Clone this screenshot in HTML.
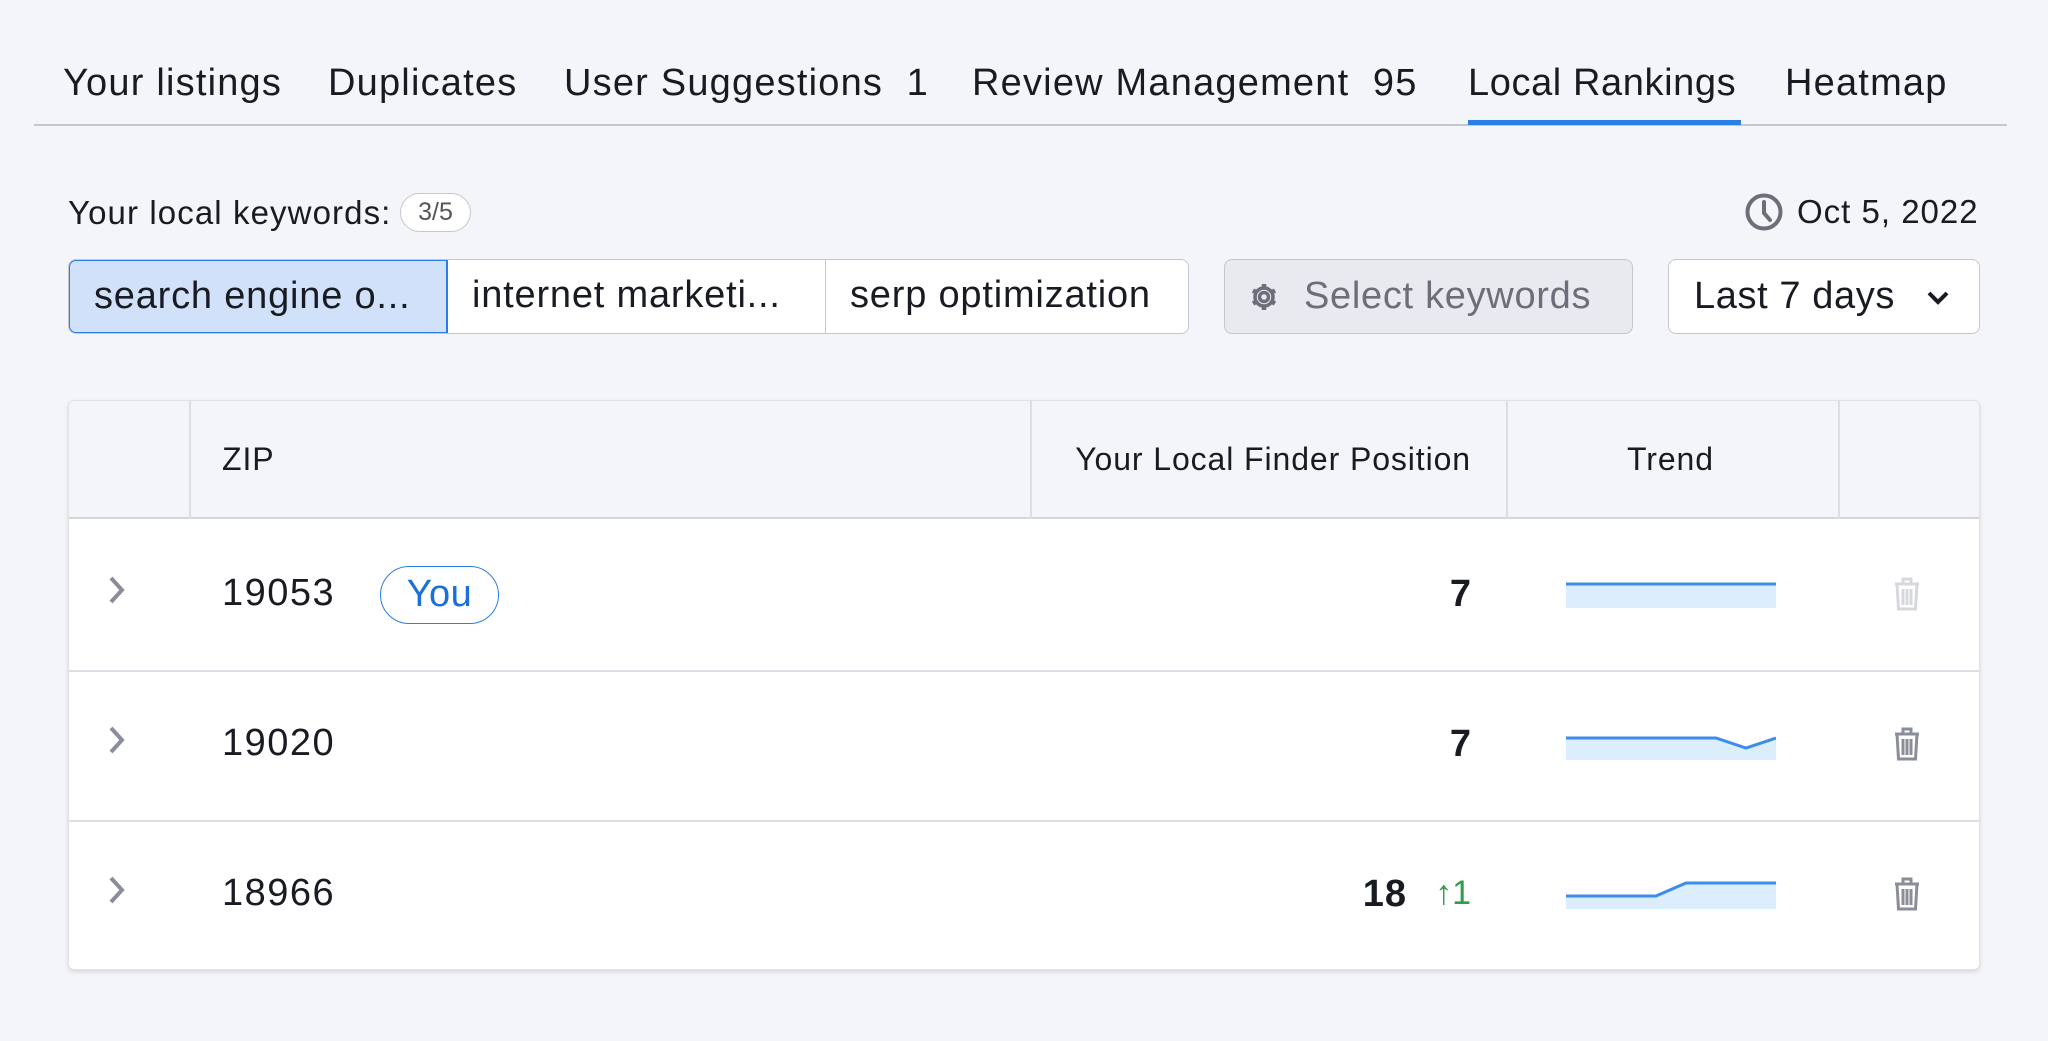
<!DOCTYPE html>
<html><head><meta charset="utf-8"><style>
*{margin:0;padding:0;box-sizing:border-box}
body{width:2048px;height:1041px;background:#f4f5f9;font-family:"Liberation Sans",Arial,sans-serif;color:#191b23;position:relative;overflow:hidden}
.a{position:absolute;white-space:nowrap}
.tab{font-size:38px;top:62px;letter-spacing:1.2px}
.seg{position:absolute;top:259px;height:75px;font-size:38px;line-height:73px;padding-left:24px;letter-spacing:0.8px}
.hd{font-size:32px;top:441px;letter-spacing:0.9px}
.num{font-size:38px;font-weight:bold;right:577px}
.zip{font-size:38px;left:222px;letter-spacing:1.5px}
</style></head><body>
<div class="a tab" style="left:63px">Your listings</div>
<div class="a tab" style="left:328px">Duplicates</div>
<div class="a tab" style="left:564px">User Suggestions&nbsp;&nbsp;1</div>
<div class="a tab" style="left:972px">Review Management&nbsp;&nbsp;95</div>
<div class="a tab" style="left:1468px;letter-spacing:0.6px">Local Rankings</div>
<div class="a tab" style="left:1785px">Heatmap</div>
<div class="a" style="left:34px;top:124px;width:1973px;height:2px;background:#c4c7cf"></div>
<div class="a" style="left:1468px;top:120px;width:273px;height:5px;background:#2b7de9"></div>

<div class="a" style="left:68px;top:194px;font-size:33px;letter-spacing:1.1px">Your local keywords:</div>
<div class="a" style="left:400px;top:193px;width:71px;height:39px;border:1px solid #c4c7cf;border-radius:20px;background:#fff;font-size:25px;line-height:37px;text-align:center;color:#555">3/5</div>
<svg class="a" style="left:1744px;top:192px" width="40" height="40" viewBox="0 0 40 40"><circle cx="20" cy="20" r="16.5" fill="none" stroke="#6c6e79" stroke-width="4"/><path d="M20 10v11l6 7" fill="none" stroke="#6c6e79" stroke-width="4" stroke-linecap="round"/></svg>
<div class="a" style="left:1797px;top:193px;font-size:33px;letter-spacing:1px">Oct 5, 2022</div>

<div class="a" style="left:68px;top:259px;width:1121px;height:75px;border:1px solid #c4c7cf;border-radius:8px;background:#fff;overflow:hidden">
<div class="seg" style="left:-1px;top:-1px;width:380px;background:#d0e1f9;border:2px solid #2b7de9;border-radius:8px 0 0 8px;line-height:71px">search engine o...</div>
<div class="seg" style="left:379px;top:-1px;width:378px;border-right:1px solid #c4c7cf">internet marketi...</div>
<div class="seg" style="left:757px;top:-1px;width:360px">serp optimization</div>
</div>
<div class="a" style="left:1224px;top:259px;width:409px;height:75px;border:1px solid #c4c7cf;border-radius:8px;background:#e9eaef;color:#6c6e79;font-size:38px;line-height:73px;padding-left:79px;letter-spacing:0.7px">Select keywords</div>
<svg class="a" style="left:1248px;top:280px" width="32" height="34" viewBox="0 0 32 34"><g fill="none" stroke="#6c6e79"><circle cx="16" cy="17" r="4.5" stroke-width="3.5"/><circle cx="16" cy="17" r="9" stroke-width="3.5"/><path d="M16 4v5M16 25v5M5 10.5l4.3 2.5M22.7 21l4.3 2.5M5 23.5l4.3-2.5M22.7 13l4.3-2.5" stroke-width="4.5"/></g></svg>
<div class="a" style="left:1668px;top:259px;width:312px;height:75px;border:1px solid #c4c7cf;border-radius:8px;background:#fff;font-size:38px;line-height:73px;padding-left:25px;letter-spacing:0.6px">Last 7 days</div>
<svg class="a" style="left:1925px;top:288px" width="26" height="20" viewBox="0 0 26 20"><path d="M4 5l9 9 9-9" fill="none" stroke="#191b23" stroke-width="4"/></svg>

<div class="a" style="left:68px;top:400px;width:1912px;height:570px;background:#fff;border:1px solid #e0e1e9;border-radius:6px;box-shadow:0 2px 4px rgba(0,0,0,.12);overflow:hidden">
<div style="position:absolute;left:0;top:0;width:100%;height:118px;background:#f4f5f9;border-bottom:2px solid #d4d6de"></div>
<div style="position:absolute;left:120px;top:0;width:2px;height:118px;background:#dcdee5"></div>
<div style="position:absolute;left:961px;top:0;width:2px;height:118px;background:#dcdee5"></div>
<div style="position:absolute;left:1437px;top:0;width:2px;height:118px;background:#dcdee5"></div>
<div style="position:absolute;left:1769px;top:0;width:2px;height:118px;background:#dcdee5"></div>
<div style="position:absolute;left:0;top:269px;width:100%;height:2px;background:#dcdee5"></div>
<div style="position:absolute;left:0;top:419px;width:100%;height:2px;background:#dcdee5"></div>
</div>
<div class="a hd" style="left:222px">ZIP</div>
<div class="a hd" style="right:577px">Your Local Finder Position</div>
<div class="a hd" style="left:1627px">Trend</div>

<svg class="a" style="left:106px;top:574px" width="22" height="32"><path d="M5 4l11 12L5 28" fill="none" stroke="#8b8e98" stroke-width="4"/></svg>
<svg class="a" style="left:106px;top:724px" width="22" height="32"><path d="M5 4l11 12L5 28" fill="none" stroke="#8b8e98" stroke-width="4"/></svg>
<svg class="a" style="left:106px;top:874px" width="22" height="32"><path d="M5 4l11 12L5 28" fill="none" stroke="#8b8e98" stroke-width="4"/></svg>

<div class="a zip" style="top:572px">19053</div>
<div class="a" style="left:380px;top:566px;width:119px;height:58px;border:1.5px solid #2b7de9;border-radius:29px;color:#1a6fd8;font-size:38px;line-height:55px;text-align:center;letter-spacing:0.5px">You</div>
<div class="a zip" style="top:722px">19020</div>
<div class="a zip" style="top:872px">18966</div>

<div class="a num" style="top:573px">7</div>
<div class="a num" style="top:723px">7</div>
<div class="a num" style="top:873px;right:641px;letter-spacing:1px">18</div>
<div class="a" style="right:577px;top:874px;font-size:34px;color:#2e9e4b">↑1</div>

<svg class="a" style="left:1566px;top:580px" width="210" height="30"><rect x="0" y="4" width="210" height="24" fill="#dcedfd"/><path d="M0 4H210" stroke="#3b8ceb" stroke-width="3"/></svg>
<svg class="a" style="left:1566px;top:734px" width="210" height="28"><path d="M0 4H150L180 14L210 4V26H0Z" fill="#dcedfd"/><path d="M0 4H150L180 14L210 4" fill="none" stroke="#3b8ceb" stroke-width="3"/></svg>
<svg class="a" style="left:1566px;top:880px" width="210" height="30"><path d="M0 16H90L120 3H210V29H0Z" fill="#dcedfd"/><path d="M0 16H90L120 3H210" fill="none" stroke="#3b8ceb" stroke-width="3"/></svg>

<svg class="a" style="left:1892px;top:576px" width="30" height="36" viewBox="0 0 30 36"><g fill="none" stroke="#d6d8de" stroke-width="3"><path d="M3 8h24M11 8V3h8v5M5 8l1.5 25h17L25 8M11 13v16M15 13v16M19 13v16"/></g></svg>
<svg class="a" style="left:1892px;top:726px" width="30" height="36" viewBox="0 0 30 36"><g fill="none" stroke="#8b8e98" stroke-width="3"><path d="M3 8h24M11 8V3h8v5M5 8l1.5 25h17L25 8M11 13v16M15 13v16M19 13v16"/></g></svg>
<svg class="a" style="left:1892px;top:876px" width="30" height="36" viewBox="0 0 30 36"><g fill="none" stroke="#8b8e98" stroke-width="3"><path d="M3 8h24M11 8V3h8v5M5 8l1.5 25h17L25 8M11 13v16M15 13v16M19 13v16"/></g></svg>
</body></html>
